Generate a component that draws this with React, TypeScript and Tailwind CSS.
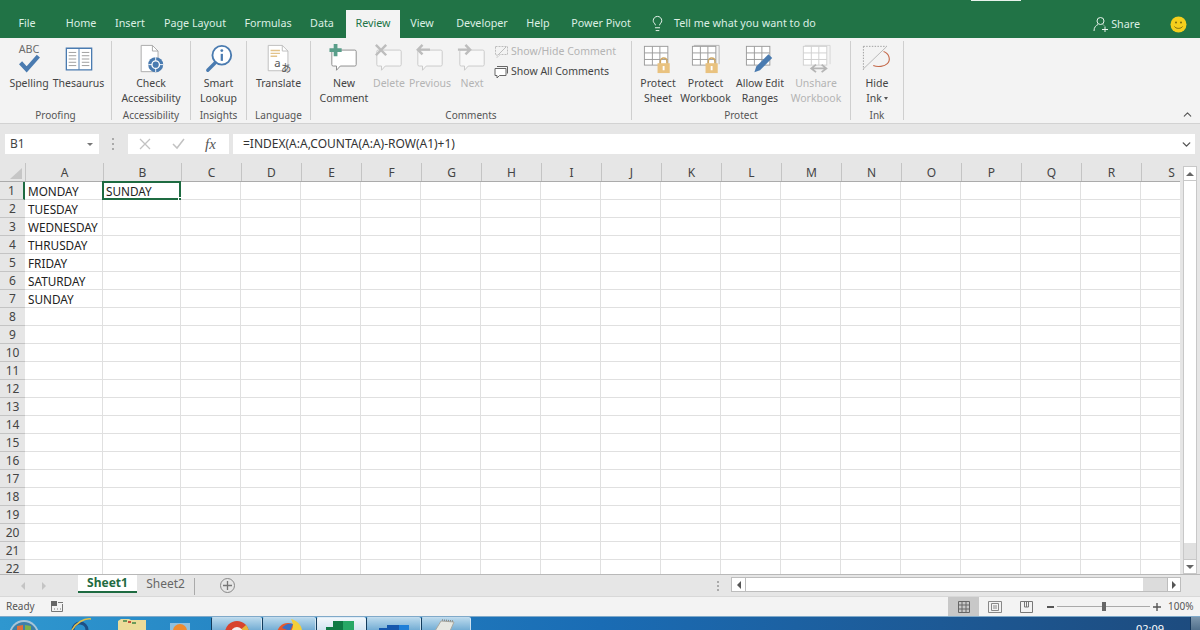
import type { ReactNode } from 'react'
import { ChevronDown, ChevronUp, Lightbulb } from 'lucide-react'

const columns = [
  ['A', 78], ['B', 78], ['C', 60], ['D', 60], ['E', 60], ['F', 60], ['G', 60], ['H', 60], ['I', 60], ['J', 60],
  ['K', 60], ['L', 60], ['M', 60], ['N', 60], ['O', 60], ['P', 60], ['Q', 60], ['R', 60], ['S', 60],
] as const

const days = ['MONDAY', 'TUESDAY', 'WEDNESDAY', 'THRUSDAY', 'FRIDAY', 'SATURDAY', 'SUNDAY']
const rows = Array.from({ length: 22 }, (_, i) => i + 1)

const tabs = [
  ['File', 54], ['Home', 54], ['Insert', 44], ['Page Layout', 86], ['Formulas', 60], ['Data', 48],
  ['Review', 54], ['View', 44], ['Developer', 76], ['Help', 36], ['Power Pivot', 90],
] as const

function Bubble({ dim, children }: { dim?: boolean; children?: ReactNode }) {
  const line = dim ? '#c9c9c9' : '#8a8a8a'
  return (
    <svg width="32" height="32" viewBox="0 0 32 32" fill="none">
      <path d="M4.500 6.500h23a1.500 1.500 0 0 1 1.500 1.500v14a1.500 1.500 0 0 1-1.500 1.500H12l-4 4.500v-4.500H4.500a1.500 1.500 0 0 1-1.500-1.500V8a1.500 1.500 0 0 1 1.500-1.500z" fill={dim ? '#f8f8f8' : '#fff'} stroke={line} />
      {children}
    </svg>
  )
}

function SheetGrid({ dim, x = 1 }: { dim?: boolean; x?: number }) {
  const c = dim ? '#cfcfcf' : '#9a9a9a'
  return (
    <g stroke={c} fill="none">
      <rect x={x + 0.5} y="2.500" width="25" height="20" fill="#fff" />
      <path d={`M${x + 9} 2.500v20M${x + 17} 2.500v20M${x + 0.5} 9.500h25M${x + 0.5} 16.500h25`} />
    </g>
  )
}

function Lock({ x = 15 }: { x?: number }) {
  return (
    <g transform={`translate(${x} 14)`}>
      <path d="M3.500 7V4.500a3.500 3.500 0 0 1 7 0V7" stroke="#cfa762" strokeWidth="1.600" fill="none" />
      <rect x="0.500" y="6.500" width="13" height="10.500" fill="#e9c27f" />
      <rect x="6" y="9.500" width="2" height="4.500" fill="#fff" />
    </g>
  )
}

const icons: Record<string, ReactNode> = {
  spelling: (
    <svg width="32" height="32" viewBox="0 0 32 32" fill="none">
      <text x="16" y="10" textAnchor="middle" fontFamily="Noto Sans, sans-serif" fontSize="11.500" fill="#6b6b6b">ABC</text>
      <path d="M7 20l6.500 7L26 13" stroke="#4a7bb0" strokeWidth="4.500" />
    </svg>
  ),
  thesaurus: (
    <svg width="32" height="32" viewBox="0 0 32 32" fill="none">
      <path d="M2.500 4.500h27v23h-27z" fill="#fff" stroke="#4a7bb0" strokeWidth="1.400" />
      <path d="M16 4.500v23" stroke="#4a7bb0" />
      <path d="M5 9h8M5 12.500h8M5 16h8M5 19.500h8M5 23h8M19 9h8M19 12.500h8M19 16h8M19 19.500h8M19 23h8" stroke="#9a9a9a" />
    </svg>
  ),
  accessibility: (
    <svg width="32" height="32" viewBox="0 0 32 32" fill="none">
      <path d="M5.500 1.500h12l6 6v22h-18z" fill="#fff" stroke="#a9a9a9" />
      <path d="M17.500 1.500v6h6" stroke="#a9a9a9" />
      <circle cx="21" cy="22" r="8" fill="#4a7bb0" />
      <circle cx="21" cy="22" r="4" fill="none" stroke="#fff" strokeWidth="1.400" />
      <path d="M21 14v4M21 26v4M13 22h4M25 22h4" stroke="#fff" strokeWidth="1" />
    </svg>
  ),
  lookup: (
    <svg width="32" height="32" viewBox="0 0 32 32" fill="none">
      <circle cx="19" cy="12" r="10" fill="#fff" stroke="#4a7bb0" strokeWidth="2" />
      <path d="M12 20L4 28" stroke="#4a7bb0" strokeWidth="3.500" strokeLinecap="round" />
      <circle cx="19" cy="7" r="1.500" fill="#4a7bb0" />
      <path d="M19 10.500V18" stroke="#4a7bb0" strokeWidth="2.400" />
    </svg>
  ),
  translate: (
    <svg width="32" height="32" viewBox="0 0 32 32" fill="none">
      <path d="M4.500 1.500h15l6 6v21h-21z" fill="#fff" stroke="#bdbdbd" />
      <path d="M19.500 1.500v6h6" stroke="#bdbdbd" />
      <path d="M7 7h10M7 10h10M7 13h7" stroke="#e3c38a" strokeWidth="1.500" />
      <text x="11" y="24" fontFamily="Noto Sans, sans-serif" fontSize="12" fill="#555">a</text>
      <text x="18" y="30" fontFamily="Noto Sans CJK JP, sans-serif" fontSize="11" fill="#555">あ</text>
    </svg>
  ),
  newComment: (
    <Bubble>
      <path d="M7 0v13M0.500 6.500h13" stroke="#5a9e8a" strokeWidth="4" />
    </Bubble>
  ),
  deleteComment: (
    <Bubble dim>
      <path d="M2 1l11 11M13 1L2 12" stroke="#bdbdbd" strokeWidth="2.600" />
    </Bubble>
  ),
  previous: (
    <Bubble dim>
      <path d="M16 6H3M8 1L3 6l5 5" stroke="#bdbdbd" strokeWidth="2.600" />
    </Bubble>
  ),
  next: (
    <Bubble dim>
      <path d="M1 6h13M9 1l5 5-5 5" stroke="#bdbdbd" strokeWidth="2.600" />
    </Bubble>
  ),
  protectSheet: (
    <svg width="32" height="32" viewBox="0 0 32 32" fill="none">
      <SheetGrid />
      <Lock />
    </svg>
  ),
  protectBook: (
    <svg width="32" height="32" viewBox="0 0 32 32" fill="none">
      <path d="M3 1.500h27v20" stroke="#b5b5b5" />
      <SheetGrid />
      <Lock />
    </svg>
  ),
  allowEdit: (
    <svg width="32" height="32" viewBox="0 0 32 32" fill="none">
      <SheetGrid />
      <path d="M10 30l2-6L25 11l4 4-13 13z" fill="#4a7bb0" />
    </svg>
  ),
  unshare: (
    <svg width="32" height="32" viewBox="0 0 32 32" fill="none">
      <path d="M4 1.500h27v20" stroke="#d5d5d5" />
      <SheetGrid dim x={2} />
      <path d="M12 26h14M16 22l-5 4 5 4M22 22l5 4-5 4" stroke="#b5b5b5" strokeWidth="2" />
    </svg>
  ),
  hideInk: (
    <svg width="32" height="32" viewBox="0 0 32 32" fill="none">
      <path d="M1.500 2.500h25M1.500 2.500v25" stroke="#9a9a9a" strokeDasharray="1.500 1.500" />
      <path d="M1 27L26 3" stroke="#b5b5b5" />
      <path d="M23 8c6 2 8 9 4 13-3 3-10 4-15 2" stroke="#c4694a" strokeWidth="1.200" />
    </svg>
  ),
}

function RibbonButton({ icon, lines, width, dim }: { icon: string; lines: ReactNode[]; width: number; dim?: boolean }) {
  return (
    <div className="flex flex-col items-center shrink-0" style={{ width }}>
      <div className="h-[30px] w-[30px] shrink-0 mt-[3px] [&>svg]:w-[30px] [&>svg]:h-[30px]">{icons[icon]}</div>
      {lines.map((l, i) => (
        <div key={i} className={`h-[15px] leading-[15px] whitespace-nowrap ${i === 0 ? 'mt-[2px]' : ''} ${dim ? 'text-[#b4b4b4]' : 'text-[#444]'}`}>{l}</div>
      ))}
    </div>
  )
}

function Group({ label, width, children, className = '' }: { label: string; width: number; children: ReactNode; className?: string }) {
  return (
    <div className="flex shrink-0 h-[81px]" style={{ width }}>
      <div className="flex-1 min-w-0 flex flex-col">
        <div className={`flex h-[67px] shrink-0 ${className}`}>{children}</div>
        <div className="text-center text-[10px] leading-[14px] text-[#555]">{label}</div>
      </div>
      <div className="w-px bg-[#cfcfcf] h-[79px] shrink-0" />
    </div>
  )
}

function Ribbon() {
  return (
    <div className="h-[86px] bg-[#f3f3f3] border-b border-[#d2d2d2] flex pt-[3px] text-[10.500px] relative">
      <Group label="Proofing" width={112} className="pl-1">
        <RibbonButton icon="spelling" lines={['Spelling']} width={50} />
        <RibbonButton icon="thesaurus" lines={['Thesaurus']} width={49} />
      </Group>
      <Group label="Accessibility" width={79} className="justify-center">
        <RibbonButton icon="accessibility" lines={['Check', 'Accessibility']} width={70} />
      </Group>
      <Group label="Insights" width={56} className="justify-center">
        <RibbonButton icon="lookup" lines={['Smart', 'Lookup']} width={50} />
      </Group>
      <Group label="Language" width={64} className="justify-center">
        <RibbonButton icon="translate" lines={['Translate']} width={56} />
      </Group>
      <Group label="Comments" width={321} className="pl-2">
        <RibbonButton icon="newComment" lines={['New', 'Comment']} width={50} />
        <RibbonButton icon="deleteComment" lines={['Delete']} width={40} dim />
        <RibbonButton icon="previous" lines={['Previous']} width={42} dim />
        <RibbonButton icon="next" lines={['Next']} width={42} dim />
        <div className="flex flex-col pt-[3px] pl-[1px] gap-[5px]">
          <div className="flex items-center gap-[2px] h-[15px] text-[#b4b4b4] whitespace-nowrap">
            <svg width="15" height="14" viewBox="0 0 15 14" fill="none"><path d="M1.500 1.500h12v8H6l-3 3v-3H1.500z" stroke="#bdbdbd" strokeDasharray="2 1" /><path d="M4 10l8-8" stroke="#bdbdbd" /></svg>
            Show/Hide Comment
          </div>
          <div className="flex items-center gap-[2px] h-[15px] text-[#444] whitespace-nowrap">
            <svg width="15" height="14" viewBox="0 0 15 14" fill="none"><path d="M3 1.500h10.500v7" stroke="#666" /><path d="M1 3.500h11v7H5.500l-2.500 2.500v-2.500H1z" fill="#fff" stroke="#666" /></svg>
            Show All Comments
          </div>
        </div>
      </Group>
      <Group label="Protect" width={219}>
        <RibbonButton icon="protectSheet" lines={['Protect', 'Sheet']} width={52} />
        <RibbonButton icon="protectBook" lines={['Protect', 'Workbook']} width={43} />
        <RibbonButton icon="allowEdit" lines={['Allow Edit', 'Ranges']} width={66} />
        <RibbonButton icon="unshare" lines={['Unshare', 'Workbook']} width={46} dim />
      </Group>
      <Group label="Ink" width={53} className="justify-center">
        <RibbonButton
          icon="hideInk"
          lines={['Hide', <span key="ink" className="flex items-center gap-[2px]">Ink<span className="w-0 h-0 border-x-[2.500px] border-x-transparent border-t-[3px] border-t-[#555]" /></span>]}
          width={44}
        />
      </Group>
      <ChevronUp size={13} strokeWidth={2} className="absolute right-[6px] bottom-[2px] text-[#555]" />
    </div>
  )
}

function TitleBar() {
  return (
    <div className="h-[38px] bg-[#217346] text-[10.750px] text-[#dcefe4] flex flex-col">
      <div className="h-[10px] shrink-0">
        <div className="ml-[971px] w-[50px] h-px bg-[#e9f2ec]" />
      </div>
      <div className="flex h-[28px]">
        {tabs.map(([name, w]) => (
          <div
            key={name}
            className={`shrink-0 flex items-center justify-center pb-[1px] whitespace-nowrap ${name === 'Review' ? 'bg-[#f3f3f3] text-[#217346]' : ''}`}
            style={{ width: w }}
          >
            {name}
          </div>
        ))}
        <div className="flex items-center pb-[1px] ml-[3px] gap-[8px] whitespace-nowrap">
          <Lightbulb size={17} strokeWidth={1.400} className="text-[#e8f3ec]" />
          <span>Tell me what you want to do</span>
        </div>
        <div className="ml-auto flex items-center pr-[13px]">
          <svg width="16" height="16" viewBox="0 0 16 16" fill="none" stroke="#e8f3ec">
            <circle cx="7.500" cy="5" r="3.500" />
            <path d="M1 15c0-4 2-5.500 4-6.500M10 8.500l1 1M9 13.500h6M12 10.500v6" />
          </svg>
          <span className="ml-[2px] mr-[30px]">Share</span>
          <svg width="17" height="17" viewBox="0 0 17 17">
            <circle cx="8.500" cy="8.500" r="8" fill="#f4cf1c" />
            <circle cx="6" cy="6.500" r="1" fill="#7b6a10" />
            <circle cx="11" cy="6.500" r="1" fill="#7b6a10" />
            <path d="M4.500 10.500c1.500 2.500 6.500 2.500 8 0" stroke="#7b6a10" fill="none" />
          </svg>
        </div>
      </div>
    </div>
  )
}

function FormulaBar() {
  return (
    <div className="h-[39px] bg-[#e6e6e6] flex items-start pt-[10px] pl-[5px] pr-[5px] text-[12px]">
      <div className="w-[94px] h-[20px] bg-white flex items-center justify-between pl-[5px] pr-[6px] text-[#444]">
        B1
        <span className="w-0 h-0 border-x-[3px] border-x-transparent border-t-[3px] border-t-[#777]" />
      </div>
      <div className="w-[29px] h-[20px] flex items-center justify-center">
        <svg width="3" height="12" viewBox="0 0 3 12" fill="#aaa"><rect y="0" width="2" height="2" /><rect y="5" width="2" height="2" /><rect y="10" width="2" height="2" /></svg>
      </div>
      <div className="w-[101px] h-[20px] bg-white flex items-center text-[#b5b5b5]">
        <svg className="ml-[11px]" width="12" height="12" viewBox="0 0 12 12" fill="none" stroke="#c2c2c2" strokeWidth="1.300"><path d="M1 1l10 10M11 1L1 11" /></svg>
        <svg className="ml-[21px]" width="13" height="12" viewBox="0 0 13 12" fill="none" stroke="#c2c2c2" strokeWidth="1.500"><path d="M1 6l4 4 7-9" /></svg>
        <span className="ml-[20px] text-[#555] text-[15px] italic" style={{ fontFamily: '"Liberation Serif", serif' }}>fx</span>
      </div>
      <div className="ml-[4px] flex-1 h-[20px] bg-white flex items-center justify-between pl-[10px] pr-[2px] text-[#333]">
        =INDEX(A:A,COUNTA(A:A)-ROW(A1)+1)
        <ChevronDown size={13} strokeWidth={2.600} className="text-[#555]" />
      </div>
    </div>
  )
}

function Grid() {
  return (
    <div className="h-[411px] flex bg-[#e6e6e6] overflow-hidden">
      <div className="w-[1180px] shrink-0 overflow-hidden">
        <div className="flex h-[19px] border-b border-[#ababab]">
          <div className="w-[25px] shrink-0 flex items-end justify-end pr-[3px] pb-[2px]">
            <div className="w-0 h-0 border-l-[12px] border-l-transparent border-b-[11px] border-b-[#c6c6c6]" />
          </div>
          {columns.map(([c, w]) => (
            <div
              key={c}
              className="shrink-0 flex items-center justify-center pt-[2px] text-[12px] text-[#444] border-l border-[#c4c4c4]"
              style={{ width: w }}
            >
              {c}
            </div>
          ))}
        </div>
        {rows.map(r => (
          <div key={r} className="flex h-[18px]">
            <div className={`w-[25px] shrink-0 flex items-center justify-center pt-[1px] text-[12px] text-[#444] border-b border-[#c4c4c4] ${r === 1 ? 'border-r-2 border-r-[#1e6b41]' : ''}`}>
              {r}
            </div>
            {columns.map(([c, w], i) => (
              <div
                key={c}
                className="relative shrink-0 bg-white border-b border-r border-[#e0e0e0] text-[11.750px] text-[#222] leading-[19px] pl-[3px] whitespace-nowrap"
                style={{ width: w }}
              >
                {i === 0 ? days[r - 1] : ''}
                {i === 1 && r === 1 && (
                  <>
                    <span>SUNDAY</span>
                    <div className="absolute -left-px -top-px right-[-1px] bottom-[-1px] border-2 border-[#1e6b41]" />
                    <div className="absolute right-[-2px] bottom-[-2px] w-[4px] h-[4px] bg-[#1e6b41] border-t border-l border-white" />
                  </>
                )}
              </div>
            ))}
          </div>
        ))}
      </div>
      <div className="w-[14px] shrink-0 mt-[3px] ml-[3px] bg-white border border-[#c8c8c8] flex flex-col">
        <div className="h-[14px] flex items-center justify-center border-b border-[#c8c8c8]">
          <span className="w-0 h-0 border-x-[4px] border-x-transparent border-b-[4px] border-b-[#666]" />
        </div>
        <div className="flex-1 bg-white" />
        <div className="h-[16px] bg-[#e0e0e0]" />
        <div className="h-[14px] flex items-center justify-center border-t border-[#c8c8c8]">
          <span className="w-0 h-0 border-x-[4px] border-x-transparent border-t-[4px] border-t-[#666]" />
        </div>
      </div>
    </div>
  )
}

function SheetBar() {
  return (
    <div className="h-[22px] bg-[#e6e6e6] border-t border-[#b8b8b8] flex items-start text-[12px]">
      <div className="w-[78px] h-full flex items-center pl-[21px] gap-[17px] shrink-0">
        <span className="w-0 h-0 border-y-[4px] border-y-transparent border-r-[4px] border-r-[#c4c4c4]" />
        <span className="w-0 h-0 border-y-[4px] border-y-transparent border-l-[4px] border-l-[#c4c4c4]" />
      </div>
      <div className="w-[59px] h-[18px] bg-white border-b-2 border-[#1e6b41] text-[#1e6b41] font-bold flex items-center justify-center shrink-0">Sheet1</div>
      <div className="w-[58px] h-[17px] border-r border-[#aaa] mt-[3px] text-[#666] flex items-center justify-center shrink-0 pb-[5px]">Sheet2</div>
      <div className="ml-[25px] mt-[3px] w-[15px] h-[15px] rounded-full border border-[#888] flex items-center justify-center shrink-0">
        <svg width="9" height="9" viewBox="0 0 9 9" stroke="#777" strokeWidth="1.300"><path d="M4.500 0v9M0 4.500h9" /></svg>
      </div>
      <div className="ml-[482px] mt-[6px] shrink-0">
        <svg width="3" height="10" viewBox="0 0 3 10" fill="#aaa"><rect width="2" height="2" /><rect y="4" width="2" height="2" /><rect y="8" width="2" height="2" /></svg>
      </div>
      <div className="ml-[11px] mt-[2px] w-[450px] h-[15px] flex bg-[#dcdcdc] border border-[#bdbdbd] shrink-0">
        <div className="w-[14px] flex items-center justify-center bg-white border-r border-[#bdbdbd]">
          <span className="w-0 h-0 border-y-[4px] border-y-transparent border-r-[4px] border-r-[#555]" />
        </div>
        <div className="w-[397px] bg-white" />
        <div className="flex-1" />
        <div className="w-[13px] flex items-center justify-center bg-white border-l border-[#bdbdbd]">
          <span className="w-0 h-0 border-y-[4px] border-y-transparent border-l-[4px] border-l-[#555]" />
        </div>
      </div>
    </div>
  )
}

function StatusBar() {
  return (
    <div className="h-[20px] bg-[#f3f3f3] border-t border-[#d8d8d8] flex items-center text-[10px] text-[#555]">
      <span className="ml-[6px]">Ready</span>
      <svg className="ml-[16px]" width="12" height="11" viewBox="0 0 12 11" fill="none">
        <rect x="0" y="0" width="6" height="5" fill="#666" />
        <path d="M7 1.500h5M0.500 5v5.500h11V3M3 8h1M6 8h1M9 8h1" stroke="#777" />
      </svg>
      <div className="ml-auto flex items-center h-full">
        <div className="w-[31px] h-full bg-[#c8c8c8] flex items-center justify-center">
          <svg width="12" height="12" viewBox="0 0 12 12" fill="none" stroke="#666"><path d="M.5.500h11v11H.5zM4 .500v11M8 .500v11M.5 4h11M.5 8h11" /></svg>
        </div>
        <svg className="ml-[9px]" width="14" height="12" viewBox="0 0 14 12" fill="none" stroke="#888"><path d="M.5.500h13v11H.5z" /><path d="M3.500 2.500h7v7h-7zM5 5h4M5 7h4" /></svg>
        <svg className="ml-[18px]" width="13" height="12" viewBox="0 0 13 12" fill="none" stroke="#777"><path d="M.5.500h12v11H.5zM4.500.500v5.500h4V.500M6.500.500v5.500" /></svg>
        <div className="ml-[14px] w-[7px] h-[2px] bg-[#555]" />
        <div className="ml-[3px] w-[93px] h-px bg-[#aaa] flex items-center pl-[45px]">
          <div className="w-[4px] h-[9px] bg-[#666] shrink-0" />
        </div>
        <svg className="ml-[3px]" width="8" height="8" viewBox="0 0 8 8" stroke="#555" strokeWidth="1.400"><path d="M4 0v8M0 4h8" /></svg>
        <span className="ml-[7px] mr-[7px] w-[25px] whitespace-nowrap">100%</span>
      </div>
    </div>
  )
}

function TaskButton({ width, active, children }: { width: number; active?: boolean; children: ReactNode }) {
  return (
    <div
      className={`h-[14px] shrink-0 flex justify-center overflow-hidden border-x border-t border-[#e4f0f8]/70 border-l-[#123b5c] rounded-t-[2px] bg-gradient-to-b ${active ? 'from-[#f2f7fb] to-[#cfe2f0]' : 'from-[#b8d8ec] to-[#6eaad2]'}`}
      style={{ width }}
    >
      {children}
    </div>
  )
}

function Taskbar() {
  return (
    <div className="h-[14px] overflow-hidden flex bg-gradient-to-r from-[#2f97cf] via-[#1a6cb4] to-[#1d4b7e] border-t border-[#7fa9c9] text-white">
      <svg className="ml-[8px] shrink-0" width="32" height="13" viewBox="0 0 32 13">
        <circle cx="16" cy="18" r="15" fill="#a9c6d8" />
        <circle cx="16" cy="18" r="13" fill="#3d7fa8" />
        <path d="M9 9l6-1v5H9z" fill="#e2703a" /><path d="M17 8l6 1v4h-6z" fill="#7fb04a" />
      </svg>
      <svg className="ml-[30px] shrink-0" width="22" height="13" viewBox="0 0 22 13" fill="none">
        <circle cx="10" cy="13" r="7" stroke="#1d4f86" strokeWidth="3" />
        <path d="M2 13C6 6 14 1 21 2" stroke="#e3c04a" strokeWidth="1.500" />
      </svg>
      <svg className="ml-[26px] shrink-0" width="28" height="13" viewBox="0 0 28 13">
        <path d="M0 4l3-2h8l2 1h15v10H0z" fill="#ecdc9a" />
        <path d="M5 3h4v2H5zM14 5h4v2h-4z" fill="#6b9a5a" />
        <path d="M10 4h3v2h-3z" fill="#c9503a" />
      </svg>
      <svg className="ml-[24px] shrink-0" width="20" height="13" viewBox="0 0 20 13">
        <rect y="6" width="20" height="7" fill="#8fc0de" />
        <circle cx="10" cy="14" r="7" fill="#ee8a2f" />
      </svg>
      <div className="ml-[21px] flex shrink-0">
        <TaskButton width={51}>
          <svg className="shrink-0" width="28" height="13" viewBox="0 0 28 13">
            <circle cx="14" cy="15" r="12" fill="#d8432e" />
            <path d="M14 15h12a12 12 0 0 0-3-8z" fill="#e8b53a" />
            <circle cx="14" cy="15" r="6" fill="#f3eef0" />
          </svg>
        </TaskButton>
        <TaskButton width={54}>
          <svg className="shrink-0" width="28" height="13" viewBox="0 0 28 13">
            <circle cx="13" cy="16" r="11" fill="#e8572a" />
            <path d="M16 1c7 2 11 7 11 12H16c3-4 2-8 0-12z" fill="#f3cf3a" />
            <path d="M7 10c3-4 7-5 11-4l-3 7z" fill="#3a6fc4" />
          </svg>
        </TaskButton>
        <TaskButton width={50} active>
          <svg className="shrink-0" width="30" height="13" viewBox="0 0 30 13">
            <path d="M7 3h10v10H0V9h7z" fill="#0f7a45" />
            <path d="M17 3h11v10H17z" fill="#27a866" />
          </svg>
        </TaskButton>
        <TaskButton width={55}>
          <svg className="shrink-0" width="30" height="13" viewBox="0 0 30 13">
            <path d="M8 7h12v6H0v-3h8z" fill="#1557ad" />
            <path d="M20 7h10v6H20z" fill="#1e7fd8" />
          </svg>
        </TaskButton>
        <TaskButton width={50}>
          <svg className="shrink-0" width="24" height="13" viewBox="0 0 24 13">
            <path d="M7 3l13 1-4 9H1z" fill="#e6e8e2" stroke="#a8a8a0" />
            <path d="M8 2l11 1" stroke="#8a8a85" strokeWidth="1.500" strokeDasharray="1 1" />
          </svg>
        </TaskButton>
      </div>
      <div className="ml-auto mt-[5px] text-[11px] leading-[13px]">02:09</div>
      <div className="ml-[26px] w-[10px] shrink-0 bg-gradient-to-b from-[#7d97ad] to-[#51708c] border-l border-[#16385c]" />
    </div>
  )
}

export default function App() {
  return (
    <div className="w-[1200px] h-[630px] overflow-hidden flex flex-col bg-[#e6e6e6]" style={{ fontFamily: '"Noto Sans", "Noto Sans CJK JP", sans-serif' }}>
      <TitleBar />
      <Ribbon />
      <FormulaBar />
      <Grid />
      <SheetBar />
      <StatusBar />
      <Taskbar />
    </div>
  )
}
